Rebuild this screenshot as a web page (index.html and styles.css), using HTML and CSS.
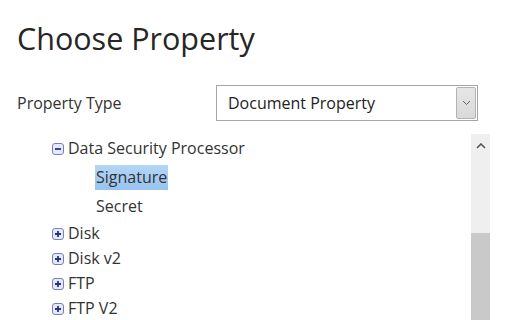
FILE: index.html
```html
<!DOCTYPE html>
<html lang="en">
<head>
    <meta charset="UTF-8">
    <title>Choose Property</title>
    <link rel="stylesheet" href="styles.css">
</head>
<body>
    <div class="dialog">
        <h1 class="title">Choose Property</h1>

        <div class="field-row">
            <span class="field-label">Property Type</span>
            <div class="select">
                <span class="select-value">Document Property</span>
                <span class="select-btn">
                    <svg width="9" height="6" viewBox="0 0 9 6"><path d="M1 1 L4.5 4.5 L8 1" fill="none" stroke="#666" stroke-width="1"/></svg>
                </span>
            </div>
        </div>

        <div class="tree-box">
            <ul class="tree">
                <li class="node">
                    <span class="toggle">
                        <svg width="12" height="12" viewBox="0 0 12 12"><rect x="0.5" y="0.5" width="11" height="11" rx="2.5" fill="#e6e9f7" stroke="#7880c0"/><path d="M3 6 H9" stroke="#26338c" stroke-width="1.8"/></svg>
                    </span>
                    <span class="node-text">Data Security Processor</span>
                </li>
                <li class="leaf"><span class="node-text selected">Signature</span></li>
                <li class="leaf"><span class="node-text">Secret</span></li>
                <li class="node">
                    <span class="toggle">
                        <svg width="12" height="12" viewBox="0 0 12 12"><rect x="0.5" y="0.5" width="11" height="11" rx="2.5" fill="#e6e9f7" stroke="#7880c0"/><path d="M3 6 H9 M6 3 V9" stroke="#26338c" stroke-width="1.8"/></svg>
                    </span>
                    <span class="node-text">Disk</span>
                </li>
                <li class="node">
                    <span class="toggle">
                        <svg width="12" height="12" viewBox="0 0 12 12"><rect x="0.5" y="0.5" width="11" height="11" rx="2.5" fill="#e6e9f7" stroke="#7880c0"/><path d="M3 6 H9 M6 3 V9" stroke="#26338c" stroke-width="1.8"/></svg>
                    </span>
                    <span class="node-text">Disk v2</span>
                </li>
                <li class="node">
                    <span class="toggle">
                        <svg width="12" height="12" viewBox="0 0 12 12"><rect x="0.5" y="0.5" width="11" height="11" rx="2.5" fill="#e6e9f7" stroke="#7880c0"/><path d="M3 6 H9 M6 3 V9" stroke="#26338c" stroke-width="1.8"/></svg>
                    </span>
                    <span class="node-text">FTP</span>
                </li>
                <li class="node">
                    <span class="toggle">
                        <svg width="12" height="12" viewBox="0 0 12 12"><rect x="0.5" y="0.5" width="11" height="11" rx="2.5" fill="#e6e9f7" stroke="#7880c0"/><path d="M3 6 H9 M6 3 V9" stroke="#26338c" stroke-width="1.8"/></svg>
                    </span>
                    <span class="node-text">FTP V2</span>
                </li>
            </ul>
            <div class="scrollbar">
                <div class="scroll-track">
                    <svg class="scroll-arrow" width="10" height="6" viewBox="0 0 10 6"><path d="M1 5 L5 1 L9 5" fill="none" stroke="#555" stroke-width="1.6"/></svg>
                </div>
                <div class="scroll-thumb"></div>
            </div>
        </div>
    </div>
</body>
</html>
```

FILE: styles.css
```css
body {
    margin: 0;
    font-family: "Open Sans", Arial, sans-serif;
    color: #333;
    background: #fff;
    overflow: hidden;
}

.dialog {
    width: 509px;
    height: 320px;
    padding: 0 0 0 17px;
    box-sizing: border-box;
    overflow: hidden;
}

.title {
    margin: 0;
    padding-top: 18px;
    font-family: "Open Sans", sans-serif;
    font-weight: 400;
    font-size: 30.5px;
    line-height: 40px;
    color: #262626;
}

.field-row {
    display: flex;
    align-items: center;
    margin-top: 27px;
}

.field-label {
    width: 199px;
    font-size: 16px;
}

.select {
    width: 262px;
    height: 36px;
    box-sizing: border-box;
    border: 1px solid #a6a6a6;
    display: flex;
    align-items: center;
}

.select-value {
    flex: 1;
    padding-left: 11px;
    font-size: 16px;
    color: #222;
}

.select-btn {
    width: 20px;
    height: 32px;
    margin-right: 1px;
    background: linear-gradient(#e6e6e6, #d9d9d9);
    border: 1px solid #b3b3b3;
    border-radius: 2px;
    box-sizing: border-box;
    display: flex;
    align-items: center;
    justify-content: center;
}

.tree-box {
    display: flex;
    margin-top: 13px;
    height: 190px;
}

.tree {
    list-style: none;
    margin: 0;
    padding: 0 0 0 35px;
    width: 419px;
    font-size: 16px;
}

.node {
    display: flex;
    align-items: center;
    height: 25px;
}

.node:first-child {
    height: 29px;
}

.toggle {
    display: flex;
    width: 15px;
}

.leaf {
    height: 29px;
    display: flex;
    align-items: center;
    padding-left: 43px;
}

.node-text {
    padding: 0 1px;
    line-height: 25px;
}

.selected {
    background: linear-gradient(#b4d6f7, #97c3ee);
}

.scrollbar {
    width: 19px;
    display: flex;
    flex-direction: column;
}

.scroll-track {
    height: 99px;
    background: #efefef;
    display: flex;
    justify-content: center;
    padding-top: 9px;
    box-sizing: border-box;
}

.scroll-thumb {
    flex: 1;
    background: #c9c9c9;
}
```
